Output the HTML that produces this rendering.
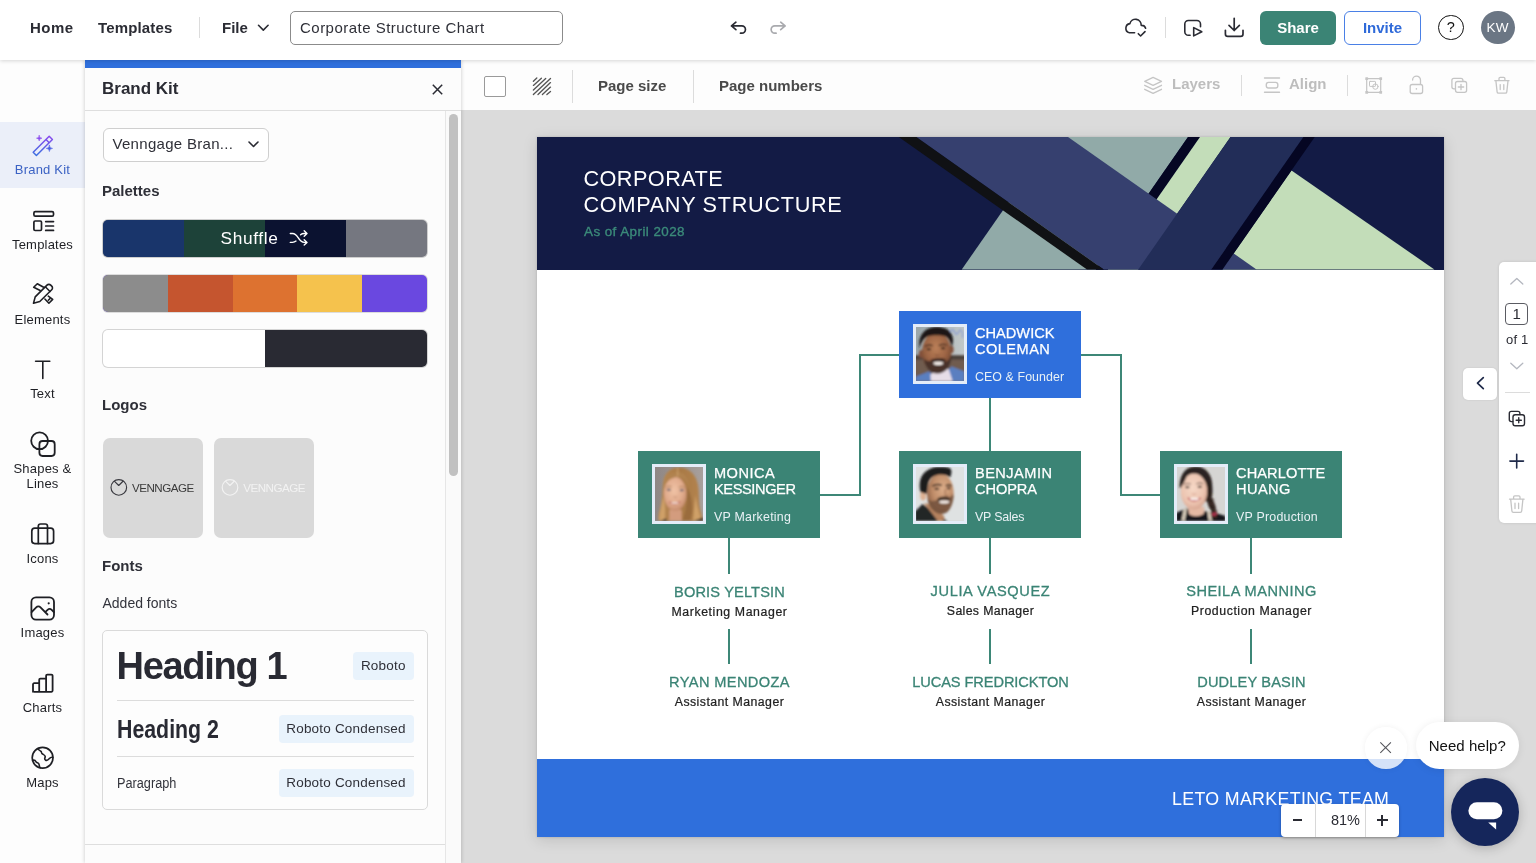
<!DOCTYPE html>
<html>
<head>
<meta charset="utf-8">
<title>Corporate Structure Chart</title>
<style>
*{box-sizing:border-box;margin:0;padding:0}
html,body{width:1536px;height:863px;overflow:hidden}
body{font-family:"Liberation Sans",sans-serif;background:#dbdbdb;position:relative;color:#2a2b33}
#root{position:absolute;left:0;top:0;width:1536px;height:863px;overflow:hidden;will-change:transform;background:#dbdbdb}
.abs{position:absolute}
svg{position:absolute;overflow:visible}
/* top bar */
#topbar{position:absolute;left:0;top:0;width:1536px;height:60px;background:#fff;box-shadow:0 1px 4px rgba(0,0,0,.16);z-index:30}
.tb-link{position:absolute;top:19px;font-size:15px;font-weight:bold;color:#2b2c34;line-height:17px;white-space:nowrap}
.vdiv{position:absolute;width:1px;background:#dcdcdc}
#title{position:absolute;left:290px;top:11px;width:273px;height:34px;border:1px solid #8b8b8b;border-radius:5px;font-size:15px;line-height:31px;padding-left:9px;color:#2f3038;background:#fff;letter-spacing:.48px}
.btn{position:absolute;top:11px;height:34px;border-radius:6px;font-size:15px;font-weight:bold;text-align:center;line-height:33px}
/* sidebar */
#sidebar{position:absolute;left:0;top:60px;width:85px;height:803px;background:#fdfdfd;z-index:5}
.sb-item{position:absolute;left:0;width:85px;text-align:center;font-size:13px;line-height:15px;color:#1e1f24;letter-spacing:.2px}
/* panel */
#panel{position:absolute;left:85px;top:60px;width:376px;height:803px;background:#fcfcfc;z-index:10;box-shadow:0 0 4px rgba(0,0,0,.22)}
.h{position:absolute;left:17px;font-size:15px;font-weight:bold;color:#2f3038;line-height:17px;white-space:nowrap}
.tag{height:27.700px;border-radius:4px;background:#e9f3fc;font-size:13.5px;line-height:28px;text-align:center;color:#2f3038;white-space:nowrap;letter-spacing:.2px}
/* toolbar2 */
#tool2{position:absolute;left:461px;top:60px;width:1075px;height:50px;background:#fdfdfd;z-index:4}
.t2{position:absolute;top:16.500px;font-size:15px;font-weight:bold;line-height:17px;white-space:nowrap}
/* page */
#page{position:absolute;left:537px;top:137px;width:907px;height:700px;background:#fff;box-shadow:0 0 2px rgba(0,0,0,.16),0 3px 14px rgba(0,0,0,.13);overflow:hidden}
.node{position:absolute;width:182px;height:87px;background:#3b8475;color:#fff}
.node .ph{position:absolute;left:14px;top:13.300px;width:54px;height:59.400px;border:3px solid #e4ecf8;overflow:hidden;background:#bbb}
.node .nm{-webkit-text-stroke:.25px #fff;position:absolute;left:76px;top:14px;font-size:14.6px;line-height:16.3px;white-space:nowrap}
.node .rl{position:absolute;left:76px;top:59px;font-size:12.4px;line-height:14px;white-space:nowrap;color:#e9f1f5}
.ln{position:absolute;background:#3d8777}
.pn{-webkit-text-stroke:.3px #3b8475;position:absolute;width:260px;text-align:center;font-size:14.6px;line-height:16px;color:#3b8475;white-space:nowrap;letter-spacing:.15px}
.pr{-webkit-text-stroke:.22px #222;position:absolute;width:260px;text-align:center;font-size:12.3px;line-height:14px;color:#222;white-space:nowrap;letter-spacing:.2px}
</style>
</head>
<body>
<svg width="0" height="0" style="position:absolute"><defs>
<filter id="bl" x="-5%" y="-5%" width="110%" height="110%"><feGaussianBlur stdDeviation="0.85"/></filter>
<radialGradient id="f1" cx=".48" cy=".38" r=".62"><stop offset="0" stop-color="#bb8059"/><stop offset=".6" stop-color="#9c6444"/><stop offset="1" stop-color="#6e4530"/></radialGradient>
<radialGradient id="f2" cx=".45" cy=".4" r=".62"><stop offset="0" stop-color="#f0c3a6"/><stop offset=".65" stop-color="#e0aa8b"/><stop offset="1" stop-color="#c48b6c"/></radialGradient>
<radialGradient id="f3" cx=".6" cy=".38" r=".65"><stop offset="0" stop-color="#dcae8a"/><stop offset=".6" stop-color="#c08d69"/><stop offset="1" stop-color="#8d6046"/></radialGradient>
<radialGradient id="f4" cx=".45" cy=".4" r=".62"><stop offset="0" stop-color="#f6d8c6"/><stop offset=".7" stop-color="#ecc4b0"/><stop offset="1" stop-color="#d7a591"/></radialGradient>
<linearGradient id="b1" x1="0" y1="0" x2="1" y2="0"><stop offset="0" stop-color="#9aa6aa"/><stop offset=".6" stop-color="#b3bcbe"/><stop offset="1" stop-color="#c2c8c8"/></linearGradient>
<linearGradient id="b2" x1="0" y1="0" x2="1" y2="0"><stop offset="0" stop-color="#8f8785"/><stop offset="1" stop-color="#a8a09d"/></linearGradient>
<linearGradient id="hr2" x1="0" y1="0" x2="1" y2="0"><stop offset="0" stop-color="#b98a55"/><stop offset=".5" stop-color="#a87945"/><stop offset="1" stop-color="#b58550"/></linearGradient>
</defs></svg>
<div id="root">

<!-- ================= PAGE (canvas) ================= -->
<div id="page">
  <div class="abs" id="banner" style="left:0;top:0;width:907px;height:132.5px;background:#131b45;overflow:hidden">
    <svg style="left:0;top:0" width="907" height="132.5" viewBox="537 137 907 132.5">
      <polygon points="1054,137 1188,137 1095.8,269.5 961.75,269.5" fill="#91aaa8"/>
      <polygon points="1188,137 1200,137 1107.8,269.5 1095.8,269.5" fill="#050623"/>
      <polygon points="1200,137 1230.5,137 1138.25,269.5 1107.8,269.5" fill="#c3ddb9"/>
      <polygon points="1291.5,170.4 1434.4,269.5 1222.5,269.5" fill="#c3ddb9"/>
      <polygon points="916.25,137 1068,137 1256.5,269.5 1103.75,269.5" fill="#36406f"/>
      <polygon points="898.75,137 916.25,137 1103.75,269.5 1087,269.5" fill="#101114"/>
      <polygon points="1230.5,137 1303.5,137 1211.25,269.5 1138.25,269.5" fill="#222d58"/>
      <polygon points="1303.5,137 1314.75,137 1222.5,269.5 1211.25,269.5" fill="#050623"/>
    </svg>
    <div class="abs" style="left:46.5px;top:29px;font-size:21.7px;line-height:25.5px;color:#fff;white-space:nowrap"><span style="letter-spacing:.42px">CORPORATE</span><br><span id="cs" style="letter-spacing:.68px">COMPANY STRUCTURE</span></div>
    <div class="abs" style="left:47px;top:86.900px;font-size:13.400px;line-height:15px;color:#3b8b7a;-webkit-text-stroke:.35px #3b8b7a;white-space:nowrap;letter-spacing:.45px">As of April 2028</div>
  </div>
  <div class="abs" id="footer" style="left:0;top:622px;width:907px;height:78px;background:#2f6fdc">
    <div class="abs" style="left:635px;top:28.500px;font-size:17.800px;line-height:22px;color:#fff;white-space:nowrap;letter-spacing:.34px">LETO MARKETING TEAM</div>
  </div>

  <!-- connectors -->
  <div class="ln" style="left:322px;top:216.5px;width:41px;height:2px"></div>
  <div class="ln" style="left:322px;top:216.5px;width:2px;height:142px"></div>
  <div class="ln" style="left:283px;top:356.5px;width:41px;height:2px"></div>
  <div class="ln" style="left:544px;top:216.5px;width:41px;height:2px"></div>
  <div class="ln" style="left:583px;top:216.5px;width:2px;height:142px"></div>
  <div class="ln" style="left:583px;top:356.5px;width:41px;height:2px"></div>
  <div class="ln" style="left:452px;top:261px;width:2px;height:53px"></div>
  <div class="ln" style="left:191px;top:401px;width:2px;height:36px"></div>
  <div class="ln" style="left:452px;top:401px;width:2px;height:36px"></div>
  <div class="ln" style="left:713px;top:401px;width:2px;height:36px"></div>
  <div class="ln" style="left:191px;top:491.500px;width:2px;height:35px"></div>
  <div class="ln" style="left:452px;top:491.500px;width:2px;height:35px"></div>
  <div class="ln" style="left:713px;top:491.500px;width:2px;height:35px"></div>

  <!-- nodes -->
  <div class="node" style="left:362px;top:174px;background:#2f6fdc">
    <div class="ph" id="ph1"><svg style="left:0;top:0" width="48" height="53.400" viewBox="0 0 48.500 53.500" preserveAspectRatio="none"><rect width="49" height="54" fill="url(#b1)"/><g filter="url(#bl)">
<rect x="-2" y="28.500" width="53" height="27" fill="#6f5c4f"/><rect x="-2" y="28.500" width="53" height="4" fill="#4a413b"/>
<path d="M34 5c2-3 4-3 5 0s3 3 4 0s3-3 4 1v5" stroke="#7f95d6" stroke-width="1.300" fill="none" opacity=".8"/>
<path d="M-1 54l1-4.500l13-5l10 7l13-12l13 5v10z" fill="#5a7fc0"/>
<path d="M14.500 47.500l8.500-5l10-.5l4 12h-22z" fill="#e7dee8"/>
<ellipse cx="5.300" cy="27" rx="2.400" ry="4" fill="#82503a"/><ellipse cx="36" cy="22.500" rx="2" ry="3.800" fill="#82503a"/>
<ellipse cx="20.800" cy="25.500" rx="14.800" ry="20" fill="url(#f1)"/>
<path d="M7.500 31c1.500 8 5.500 13.500 10.500 15s11 0 14.500-5.500s3.500-10 3.500-13c-2 5-4 6.500-6 7s-4-1.500-8-1.500s-7 1.500-9.500 1s-4-1-5-3z" fill="#43302a" opacity=".92"/>
<path d="M14.500 33c3-2 12-2.500 16-.5c-1 2-3 2-8 2s-6 0-8-1.500z" fill="#3a2720"/>
<ellipse cx="22.500" cy="36.300" rx="5" ry="1.800" fill="#f3ece8"/>
<path d="M3.500 23c-1.500-10 1.500-18.500 9.500-21.500s19-1.500 22.500 5s1.500 10.500.5 14c-1-5.500-3-9.500-6-11s-13.500-2-18.500 0s-7 8-8.500 13.500z" fill="#1c1918"/>
<ellipse cx="13" cy="22.300" rx="2.300" ry="1" fill="#2a1a14"/><ellipse cx="27.300" cy="21.300" rx="2.300" ry="1" fill="#2a1a14"/>
<path d="M9 19.500c3-1.600 6-1.600 8-.6M23 18.800c3-1.600 6-1.600 8-.6" stroke="#2a1c16" stroke-width="1.100" fill="none"/>
<path d="M19 27.500c1 1.500 4 1.500 5 0" stroke="#7a4a33" stroke-width="1" fill="none"/>
</g></svg></div>
    <div class="nm"><span style="letter-spacing:0">CHADWICK</span><br><span style="letter-spacing:.45px">COLEMAN</span></div><div class="rl" style="letter-spacing:.08px">CEO &amp; Founder</div>
  </div>
  <div class="node" style="left:101px;top:314px">
    <div class="ph" id="ph2"><svg style="left:0;top:0" width="48" height="53.400" viewBox="0 0 48.500 53.500" preserveAspectRatio="none"><rect width="49" height="54" fill="url(#b2)"/><g filter="url(#bl)">
<path d="M24 .5c-9 0-15 6-16 16s-1 18-3 25s-2 9-1 12.500h44c0-6-2-9-3-15s0-15-2-23s-8-15.500-19-15.500z" fill="url(#hr2)"/>
<path d="M8 30c-1 8-3 14-4 23h6c0-8 1-16-2-23zM41 28c1 8 3 16 5.500 25h-8c1-9 1.500-17 2.500-25z" fill="#cfa068"/>
<path d="M32 20c1 10 0 22-4 33h8c3-10 2-24-4-33z" fill="#9a6c3c"/>
<path d="M14.500 43h12.500v11h-12.500z" fill="#d39c7e"/>
<ellipse cx="20.400" cy="27" rx="11.400" ry="17" fill="url(#f2)"/>
<path d="M9 19c2-9.500 8-14 14-14s10.500 5 11.500 15c-3-6.500-7-10-11.500-10s-10 2.500-14 9z" fill="#b18350"/>
<path d="M23 1v8" stroke="#d9b27c" stroke-width=".8"/>
<path d="M14.500 35.200c3 2.800 8 2.800 11-.3c-3.500.8-7.500.9-11 .3z" fill="#c0695f" stroke="#c0695f" stroke-width=".9"/>
<ellipse cx="20" cy="36" rx="3.800" ry=".9" fill="#f3e2d8"/>
<ellipse cx="14" cy="22.800" rx="2.100" ry="1" fill="#56586a"/><ellipse cx="27" cy="23.200" rx="2.100" ry="1" fill="#56586a"/>
<path d="M11 20.300c2-1.200 4-1.200 6-.4M24 20.400c2-1 4-1 6 0" stroke="#a57a52" stroke-width=".9" fill="none"/>
<path d="M18.500 29.500c1 1.200 3 1.200 4 0" stroke="#c38c6f" stroke-width="1" fill="none"/>
<path d="M6 53.500h6l-1-2zM40 53.500h8.500v-3z" fill="#2a2423"/>
</g></svg></div>
    <div class="nm"><span style="letter-spacing:.45px">MONICA</span><br><span style="letter-spacing:-.4px">KESSINGER</span></div><div class="rl" style="letter-spacing:.25px">VP Marketing</div>
  </div>
  <div class="node" style="left:362px;top:314px">
    <div class="ph" id="ph3"><svg style="left:0;top:0" width="48" height="53.400" viewBox="0 0 48.500 53.500" preserveAspectRatio="none"><rect width="49" height="54" fill="#dfe2e2"/><g filter="url(#bl)">
<path d="M-1 44.500l7.500-7.500l25 17h-32.500z" fill="#232528"/>
<path d="M8 36l9 2l12 12l-2 4h-5z" fill="#b5825f"/>
<ellipse cx="7.200" cy="28.500" rx="3" ry="5" fill="#ddb092"/>
<ellipse cx="24.600" cy="26.500" rx="13.500" ry="20" fill="url(#f3)"/>
<path d="M11.500 32c1.500 8 6.500 14 13 15s10-4 12-10s1.500-8.500.5-10c-2 3.500-4 4.500-6.500 4.500s-6-.5-9.500 1.500s-7.500 1-9.500-1z" fill="#76543f" opacity=".9"/>
<path d="M21.500 31.800c3-2.600 9-3 13-1l-1 2.400c-3-1-8-1-11 1z" fill="#3b2a22"/>
<ellipse cx="28.500" cy="35" rx="5" ry="1.500" fill="#f5eeea"/>
<path d="M4.500 25c-2-9 0-17 6-21s9-4 13-4s10 0 11.500 2s.5 6-.5 8.500c-3-2.500-8-3.500-13-2.500s-8 4-9 8s-1 9-2 11c-2-1-4-1-6-2z" fill="#1b1a1c"/>
<ellipse cx="21" cy="21.800" rx="2.500" ry="1" fill="#2a1c16"/><ellipse cx="33" cy="21.300" rx="2" ry="1" fill="#2a1c16"/>
<path d="M16.500 19.200c3-1.800 7-1.800 9.500-.8M30 18.800c2-1 4-1 6 0" stroke="#241812" stroke-width="1.400" fill="none"/>
<path d="M29.500 22v6c1 1.200 3 1 3.500 0" stroke="#9b6b4e" stroke-width="1" fill="none"/>
</g></svg></div>
    <div class="nm"><span style="letter-spacing:.45px">BENJAMIN</span><br><span style="letter-spacing:-.1px">CHOPRA</span></div><div class="rl" style="letter-spacing:-.2px">VP Sales</div>
  </div>
  <div class="node" style="left:623px;top:314px">
    <div class="ph" id="ph4"><svg style="left:0;top:0" width="48" height="53.400" viewBox="0 0 48.500 53.500" preserveAspectRatio="none"><rect width="49" height="54" fill="#d6d5d3"/><g filter="url(#bl)">
<path d="M2.500 20c0-12 6-20.500 16-20.500s16 7 17 17s0 14-2 18h-10z" fill="#2b2220"/>
<path d="M-1 54v-8l10-4.500l18 2.500l12 2l10 3v5z" fill="#17181b"/>
<path d="M11 40h17l-1 7c-5 3-11 3-15 0z" fill="#e4b9a4"/>
<path d="M4.500 53.500l2.500-12l3 .5l-2 11.500zM30.500 44l3 .5l2 9h-3.500z" fill="#dacfbd"/>
<ellipse cx="17.200" cy="24.500" rx="13.400" ry="18" fill="url(#f4)"/>
<path d="M3 22c0-8 3-15 7-18l5-3c-2.500 3-4.500 6-5.500 9s-3.500 8-6.500 12zM14 1c6 1 12 4 15 9s3 10 3 14c2-2 3-7 2-12s-6-11-12-12z" fill="#2b2220"/>
<path d="M30.500 15c3 3 4 8 4 12s3 7 4 11s2 9 3 13l-5 2c-1-4-1-8-3-11s-3-6-3-10s1-9 0-17z" fill="#2d211f"/>
<path d="M33 30l5 3M33.500 36l5.500 3M36 42l5 2.500" stroke="#55423c" stroke-width=".9"/>
<ellipse cx="37.400" cy="47.300" rx="3" ry="1.800" fill="#a8324a" transform="rotate(-15 37.400 47.300)"/>
<path d="M11 31c2 4.200 10 4.200 13 0c-3 1.500-10 1.500-13 0z" fill="#c25a5c" stroke="#c25a5c" stroke-width="1"/>
<ellipse cx="17.500" cy="32.100" rx="4.600" ry="1.300" fill="#faf2ef"/>
<ellipse cx="10.500" cy="20.300" rx="2.200" ry=".9" fill="#3a2a26"/><ellipse cx="23" cy="19.800" rx="2.200" ry=".9" fill="#3a2a26"/>
<path d="M7 17.500c2-1.200 5-1.200 7-.2M19.500 17c2-1.200 5-1.200 7-.2" stroke="#5b4540" stroke-width=".9" fill="none"/>
<path d="M15 26.500c1 1.200 3.500 1.200 4.500 0" stroke="#d49e8b" stroke-width="1" fill="none"/>
</g></svg></div>
    <div class="nm"><span style="letter-spacing:.1px">CHARLOTTE</span><br><span style="letter-spacing:.4px">HUANG</span></div><div class="rl" style="letter-spacing:.23px">VP Production</div>
  </div>

  <!-- people -->
  <div class="pn" style="left:62.5px;top:447px">BORIS YELTSIN</div>
  <div class="pr" style="left:62.5px;top:468px;letter-spacing:0.6px">Marketing Manager</div>
  <div class="pn" style="left:323.5px;top:446px;letter-spacing:0.63px">JULIA VASQUEZ</div>
  <div class="pr" style="left:323.5px;top:467px;letter-spacing:0.35px">Sales Manager</div>
  <div class="pn" style="left:584.5px;top:446px;letter-spacing:0.47px">SHEILA MANNING</div>
  <div class="pr" style="left:584.5px;top:467px;letter-spacing:0.57px">Production Manager</div>
  <div class="pn" style="left:62.5px;top:537px;letter-spacing:0.39px">RYAN MENDOZA</div>
  <div class="pr" style="left:62.5px;top:558px;letter-spacing:0.45px">Assistant Manager</div>
  <div class="pn" style="left:323.5px;top:537px;letter-spacing:-0.08px">LUCAS FREDRICKTON</div>
  <div class="pr" style="left:323.5px;top:558px;letter-spacing:0.45px">Assistant Manager</div>
  <div class="pn" style="left:584.5px;top:537px">DUDLEY BASIN</div>
  <div class="pr" style="left:584.5px;top:558px;letter-spacing:0.45px">Assistant Manager</div>
</div>

<!-- ================= TOP BAR ================= -->
<div id="topbar">
  <svg style="left:0;top:0" width="1536" height="60" viewBox="0 0 1536 60" fill="none" stroke="#2a2b33" stroke-width="1.7" stroke-linecap="round" stroke-linejoin="round">
    <path d="M258.5 25.3l4.8 4.8l4.800-4.800" stroke-width="1.6"/>
    <path d="M735.9 22.200L731.500 25.900L735.900 29.600M731.500 25.900H741.800a3.650 3.650 0 0 1 0 7.300H740.500"/>
    <path d="M780.700 22.200L785.100 25.900L780.700 29.600M785.100 25.900H774.800a3.650 3.650 0 0 0 0 7.300H776.100" stroke="#a9aaae"/>
    <!-- cloud check -->
    <path d="M1134.600 32.800H1129.400A4.700 4.700 0 0 1 1129.900 23.600A5.750 5.750 0 0 1 1141.200 25.400A4.200 4.200 0 0 1 1145.600 28.300M1138.300 33.700l2.300 2.300l4.400-4.400" stroke-width="1.6"/>
    <!-- present -->
    <path d="M1190.100 35.300H1188.400a3.600 3.600 0 0 1-3.600-3.600V24.100a3.600 3.600 0 0 1 3.600-3.600h8.500a3.600 3.600 0 0 1 3.600 3.600V26.700M1193.700 27.600v8.300l8.100-4.150z" stroke-width="1.6"/>
    <!-- download -->
    <path d="M1234.200 18.300V30.400M1229 25.400l5.200 5.100l5.200-5.100M1225.400 30.300v3.700a2.400 2.400 0 0 0 2.400 2.400h12.800a2.400 2.400 0 0 0 2.400-2.400v-3.700"/>
  </svg>
  <div class="tb-link" style="left:30px;letter-spacing:.45px">Home</div>
  <div class="tb-link" style="left:98px;letter-spacing:.15px">Templates</div>
  <div class="vdiv" style="left:199px;top:17px;height:21px"></div>
  <div class="tb-link" style="left:222px">File</div>
  <div id="title">Corporate Structure Chart</div>
  <div class="vdiv" style="left:1165px;top:17px;height:21px"></div>
  <div class="btn" style="left:1260px;width:76px;background:#3b8475;color:#fff">Share</div>
  <div class="btn" style="left:1344px;width:77px;background:#fff;color:#2f6ad9;border:1.5px solid #4a80e6;line-height:31px">Invite</div>
  <div class="abs" style="left:1438px;top:14.800px;width:25.500px;height:25.500px;border:1.800px solid #111;border-radius:50%;font-size:14.500px;text-align:center;line-height:22.500px;color:#111">?</div>
  <div class="abs" style="left:1480.800px;top:10.600px;width:33.800px;height:33.800px;border-radius:50%;background:#6b7684;color:#fff;font-size:13.500px;text-align:center;line-height:34px;letter-spacing:.2px">KW</div>
</div>

<!-- ================= SIDEBAR ================= -->
<div id="sidebar">
  <svg style="left:0;top:0;z-index:2" width="85" height="803" viewBox="0 60 85 803" fill="none" stroke="#1e1f24" stroke-width="1.7" stroke-linecap="round" stroke-linejoin="round">
    <defs><linearGradient id="wg" x1="0" y1="0" x2="0" y2="1"><stop offset="0" stop-color="#8a49ee"/><stop offset="1" stop-color="#3a70e0"/></linearGradient></defs>
    <!-- brand kit wand -->
    <g stroke="url(#wg)" stroke-width="1.5">
      <path d="M33.2 152.3L49.2 136.3L52.4 139.5L36.4 155.5Z M46 139.5L49.2 142.7"/>
      <path d="M39.2 135.5Q39.2 138.2 41.900000000000006 138.2Q39.2 138.2 39.2 140.89999999999998Q39.2 138.2 36.5 138.2Q39.2 138.2 39.2 135.5z" fill="#8a49ee" stroke="#8a49ee" stroke-width=".6"/>
      <path d="M49.4 145.3Q49.4 148.4 52.5 148.4Q49.4 148.4 49.4 151.5Q49.4 148.4 46.3 148.4Q49.4 148.4 49.4 145.3z" fill="#4d62e4" stroke="#4d62e4" stroke-width=".6"/>
    </g>
    <!-- templates -->
    <rect x="33.9" y="211.6" width="19.6" height="4.6" rx="1.4"/>
    <rect x="33.9" y="221" width="7.6" height="9.5" rx="1.2"/>
    <path d="M45.7 221.6h7.8M45.7 226h7.8M45.7 230.4h7.8"/>
    <!-- elements: pencil + ruler -->
    <g stroke-width="1.6">
      <path d="M33.5 303.2l1.7-6.3L47 285.1a2.6 2.6 0 0 1 3.7 0l1 1a2.6 2.6 0 0 1 0 3.7L39.8 301.5z"/>
      <path d="M45.3 286.8l4.7 4.7"/>
      <path d="M40.2 290.5L33.7 287.3L37.3 283.7L43.6 287.2"/>
      <path d="M48.3 296.2l4.4 3.2l-3.8 3.8l-4-4.2"/>
      <path d="M50 298.6l-1.7 1.7"/>
    </g>
    <!-- text T -->
    <path d="M35.6 361.2h14.2M42.8 361.2v17.2" stroke-width="1.6"/>
    <!-- shapes -->
    <circle cx="39.6" cy="440.8" r="8.4" stroke-width="1.8"/>
    <rect x="39.4" y="441" width="15.3" height="15" rx="3.2" stroke-width="1.8"/>
    <!-- icons briefcase -->
    <rect x="31.8" y="528.2" width="21.8" height="15.4" rx="3"/>
    <path d="M38.3 543.4V526.3a2.3 2.3 0 0 1 2.3-2.3h4.6a2.3 2.3 0 0 1 2.3 2.3V543.4"/>
    <!-- images -->
    <rect x="31.4" y="597.4" width="22.6" height="22.2" rx="4.6" stroke-width="1.8"/>
    <circle cx="48.7" cy="603.3" r="1.1" fill="#1e1f24" stroke="none"/>
    <path d="M31.6 612.2l4.6-4.9a3 3 0 0 1 4.3 0l7 7.2M46 611.3l1.6-1.5a3 3 0 0 1 4.1 0l2.2 2.4" stroke-width="1.8"/>
    <!-- charts -->
    <path d="M33 691.8v-7.4a1.2 1.2 0 0 1 1.2-1.2h5v-3.4a1.2 1.2 0 0 1 1.2-1.2h5.7v-2.8a1.2 1.2 0 0 1 1.2-1.2h4.1a1.2 1.2 0 0 1 1.2 1.2v14.8a1.2 1.2 0 0 1-1.2 1.2H34.2a1.2 1.2 0 0 1-1.2-1.2zM39.2 683.2v8.6M46.1 678.6v13.2" stroke-width="1.8"/>
    <!-- maps globe -->
    <circle cx="42.6" cy="757.7" r="10.4" stroke-width="1.7"/>
    <path d="M38.2 748.6c.3 1.6 1.6 2 2.6 2.6c1.2.8.2 1.8 1.4 2.6c1.6 1 3.2 1.4 3 3c-.2 1.4-1.200 2 .2 3.200c1.400 1.100 3-.2 4-1.400c.8-1 2-1.600 3.300-1.300M32.700 760.300c1.400-.4 2.800.4 3.400 1.500c.6 1.200 2.200.8 2.800 2.200c.5 1.300.3 2.800 1.300 3.800" stroke-width="1.6"/>
  </svg>
  <div class="abs" style="left:0;top:62px;width:85px;height:66px;background:#ebeff9"></div>
  <div class="sb-item" style="top:102px;color:#3b62c4">Brand Kit</div>
  <div class="sb-item" style="top:177px">Templates</div>
  <div class="sb-item" style="top:252px">Elements</div>
  <div class="sb-item" style="top:326px">Text</div>
  <div class="sb-item" style="top:401px">Shapes &amp;<br>Lines</div>
  <div class="sb-item" style="top:491px">Icons</div>
  <div class="sb-item" style="top:565px">Images</div>
  <div class="sb-item" style="top:640px">Charts</div>
  <div class="sb-item" style="top:715px">Maps</div>
</div>

<!-- ================= PANEL ================= -->
<div id="panel">
  <svg style="left:0;top:0;z-index:3" width="376" height="803" viewBox="85 60 376 803" fill="none" stroke-linecap="round" stroke-linejoin="round">
    <g stroke="#fff" stroke-width="1.400">
      <path d="M290.300 233.500h2.200c3 0 4.300 2 5.800 4.450s2.800 4.450 5.800 4.450h2.700M290.300 242.400h2.200c1.500 0 2.600-.5 3.500-1.300M300.600 234.800c.9-.8 2-1.300 3.500-1.300h2.700M304.200 230.800l2.800 2.700l-2.800 2.700M304.200 239.700l2.800 2.700l-2.800 2.700"/>
    </g>
    <circle cx="118.800" cy="487.400" r="7.800" stroke="#3a3a40" stroke-width="1.150"/>
    <path d="M114.300 481.200l4.400 4.300l4.500-4.500" stroke="#3a3a40" stroke-width="1.150"/>
    <circle cx="230" cy="487.400" r="7.800" stroke="#f2f2f2" stroke-width="1.150"/>
    <path d="M225.500 481.200l4.400 4.300l4.500-4.500" stroke="#f2f2f2" stroke-width="1.150"/>
  </svg>
  <div class="abs" style="left:0;top:0;width:376px;height:8px;background:#2f6fdc"></div>
  <div class="abs" style="left:17px;top:19px;font-size:17px;font-weight:bold;line-height:20px;color:#2a2b33">Brand Kit</div>
  <div class="abs" style="left:0;top:50px;width:376px;height:1px;background:#dedede"></div>
  <!-- close X -->
  <svg style="left:347px;top:24px" width="11" height="11" viewBox="0 0 11 11"><path d="M.8.8l9.4 9.4M10.2.8L.8 10.2" stroke="#2a2b33" stroke-width="1.5" fill="none"/></svg>
  <!-- scrollbar -->
  <div class="abs" style="left:360px;top:51px;width:16px;height:752px;background:#fafafa;border-left:1px solid #e6e6e6"></div>
  <div class="abs" style="left:364px;top:54px;width:8.700px;height:362px;background:#c1c1c1;border-radius:4.500px"></div>
  <!-- dropdown -->
  <div class="abs" style="left:17.5px;top:68px;width:166px;height:33.5px;border:1px solid #cfcfcf;border-radius:6px;background:#fff"></div>
  <div class="abs" style="left:27.5px;top:75.300px;font-size:15px;line-height:17px;color:#2f3038;white-space:nowrap;letter-spacing:.3px">Venngage Bran...</div>
  <svg style="left:163px;top:81px" width="11" height="7" viewBox="0 0 11 7"><path d="M1 1l4.5 4.5L10 1" stroke="#2a2b33" stroke-width="1.6" fill="none" stroke-linecap="round" stroke-linejoin="round"/></svg>
  <div class="h" style="top:122px">Palettes</div>
  <!-- palette 1 -->
  <div class="abs" style="left:18px;top:159.500px;width:324px;height:37px;border-radius:5px;overflow:hidden;box-shadow:0 0 0 1px #cfcfcf;background:#757780">
    <div class="abs" style="left:0;top:0;width:81px;height:38px;background:#19356b"></div>
    <div class="abs" style="left:81px;top:0;width:81px;height:38px;background:#1d4239"></div>
    <div class="abs" style="left:162px;top:0;width:81px;height:38px;background:#0b1230"></div>
    <div class="abs" style="left:117.500px;top:8px;font-size:17.300px;line-height:20px;color:#fff;white-space:nowrap;letter-spacing:.65px">Shuffle</div>
  </div>
  <!-- palette 2 -->
  <div class="abs" style="left:18px;top:215px;width:324px;height:36.500px;border-radius:5px;overflow:hidden;box-shadow:0 0 0 1px #dcdcdc;background:#6a48e0">
    <div class="abs" style="left:0;top:0;width:65px;height:38px;background:#8c8c8c"></div>
    <div class="abs" style="left:64.800px;top:0;width:65px;height:38px;background:#c5552f"></div>
    <div class="abs" style="left:129.600px;top:0;width:65px;height:38px;background:#dd7230"></div>
    <div class="abs" style="left:194.400px;top:0;width:64.800px;height:38px;background:#f5c24d"></div>
  </div>
  <!-- palette 3 -->
  <div class="abs" style="left:18px;top:270px;width:324px;height:37.200px;border-radius:5px;overflow:hidden;box-shadow:0 0 0 1px #d4d4d4;background:#fff">
    <div class="abs" style="left:162px;top:0;width:163px;height:38px;background:#292a33"></div>
  </div>
  <div class="h" style="top:336px">Logos</div>
  <div class="abs" style="left:17.5px;top:377.5px;width:100px;height:100px;border-radius:7px;background:#d9d9d9"></div>
  <div class="abs" style="left:128.5px;top:377.5px;width:100px;height:100px;border-radius:7px;background:#d9d9d9"></div>
  <div class="abs" style="left:47px;top:421px;font-size:11.600px;line-height:14px;color:#3a3a3a;white-space:nowrap;letter-spacing:-.5px">VENNGAGE</div>
  <div class="abs" style="left:158.200px;top:421px;font-size:11.600px;line-height:14px;color:#f2f2f2;white-space:nowrap;letter-spacing:-.5px">VENNGAGE</div>
  <div class="h" style="top:497px">Fonts</div>
  <div class="abs" style="left:17.5px;top:535px;font-size:14px;line-height:16px;color:#33343c;white-space:nowrap">Added fonts</div>
  <!-- fonts card -->
  <div class="abs" style="left:17px;top:569.500px;width:325.500px;height:180px;border:1px solid #dadada;border-radius:5px;background:#fdfdfd"></div>
  <div class="abs" id="h1" style="left:31.5px;top:584px;font-size:38px;font-weight:bold;line-height:44px;color:#292a33;white-space:nowrap;letter-spacing:-1.3px">Heading 1</div>
  <div class="abs" style="left:31.5px;top:640px;width:297px;height:1px;background:#dcdcdc"></div>
  <div class="abs" id="h2" style="left:31.5px;top:654px;font-size:26px;font-weight:bold;line-height:30px;color:#292a33;white-space:nowrap;transform:scaleX(.82);transform-origin:0 0">Heading 2</div>
  <div class="abs" style="left:31.5px;top:696px;width:297px;height:1px;background:#dcdcdc"></div>
  <div class="abs" id="pg" style="left:31.5px;top:713.800px;font-size:15.5px;line-height:18px;color:#33343c;white-space:nowrap;transform:scaleX(.82);transform-origin:0 0">Paragraph</div>
  <div class="abs tag" style="left:268px;top:592px;width:60.5px">Roboto</div>
  <div class="abs tag" style="left:193.5px;top:655px;width:135px">Roboto Condensed</div>
  <div class="abs tag" style="left:193.5px;top:709px;width:135px">Roboto Condensed</div>
  <div class="abs" style="left:0;top:784px;width:360px;height:1px;background:#dedede"></div>
</div>

<!-- ================= TOOLBAR 2 ================= -->
<div id="tool2">
  <svg style="left:0;top:0" width="1075" height="50" viewBox="461 60 1075 50" fill="none" stroke="#c5c5c5" stroke-width="1.3" stroke-linecap="round" stroke-linejoin="round">
    <g stroke="#555" stroke-width="1.35">
      <path d="M533.400 81.200L536.800 78M533.400 85.400L541.400 78.200M533.400 90L545.700 78.400M533.400 94.600L550.500 78.500M538 94.600L550.500 82.600M542.400 94.600L550.500 87.100M546.900 94.600L550.500 91.500"/>
    </g>
    <!-- layers -->
    <path d="M1153.100 77.300L1144.700 81.300L1153.100 85.400L1161.500 81.300zM1144.700 85.300L1153.100 89.400L1161.500 85.300M1144.700 89.300L1153.100 93.400L1161.500 89.300"/>
    <!-- align -->
    <path d="M1264.500 78h15M1264.500 92.200h15" stroke-width="1.4"/>
    <rect x="1266.300" y="82.400" width="11.500" height="5.600" rx="2.200" stroke-width="1.400"/>
    <!-- group -->
    <rect x="1366.700" y="78.600" width="14" height="13.700" stroke-width="1.200"/>
    <g fill="#c5c5c5" stroke="none"><rect x="1365.300" y="77.200" width="2.800" height="2.800" rx=".5"/><rect x="1379.300" y="77.200" width="2.800" height="2.800" rx=".5"/><rect x="1365.300" y="90.900" width="2.800" height="2.800" rx=".5"/><rect x="1379.300" y="90.900" width="2.800" height="2.800" rx=".5"/></g>
    <rect x="1369.500" y="81.400" width="6" height="5" rx=".6" stroke-width="1"/>
    <circle cx="1375.400" cy="86.600" r="2.700" stroke-width="1"/>
    <!-- lock -->
    <rect x="1410.200" y="84.500" width="12.400" height="9" rx="2"/>
    <path d="M1420.500 84.400V80a3.950 3.950 0 0 0-7.900 0"/>
    <circle cx="1416.400" cy="88.900" r=".8" fill="#c5c5c5" stroke="none"/>
    <!-- copy -->
    <path d="M1455.400 88.800H1453.900a2 2 0 0 1-2-2V80.300a2 2 0 0 1 2-2h7a2 2 0 0 1 2 2V81.400"/>
    <rect x="1455.500" y="81.500" width="11.100" height="10.800" rx="2"/>
    <path d="M1461 84.300v5.400M1458.300 87h5.400"/>
    <!-- trash -->
    <path d="M1494.800 80.700h14.200M1499 80.500V78.600a1.200 1.200 0 0 1 1.200-1.200h3.500a1.200 1.200 0 0 1 1.200 1.200V80.500M1495.900 80.900l1.200 11a1.400 1.400 0 0 0 1.400 1.300h6.900a1.400 1.400 0 0 0 1.400-1.300l1.200-11M1500.200 84.600v5M1503.800 84.600v5"/>
  </svg>
  <div class="abs" style="left:23px;top:16px;width:22px;height:21px;border:1px solid #9a9a9a;border-radius:2px;background:#fff"></div>
  <div class="vdiv" style="left:111px;top:10px;height:33px"></div>
  <div class="t2" style="left:137px;color:#4a4a4a">Page size</div>
  <div class="vdiv" style="left:232px;top:10px;height:33px"></div>
  <div class="t2" style="left:258px;color:#4a4a4a">Page numbers</div>
  <div class="t2" style="left:711px;top:15.300px;color:#bdbdbd">Layers</div>
  <div class="vdiv" style="left:780px;top:15px;height:21px"></div>
  <div class="t2" style="left:828px;top:15.300px;color:#bdbdbd">Align</div>
  <div class="vdiv" style="left:886px;top:15px;height:21px"></div>
</div>

<!-- ================= FLOATING WIDGETS ================= -->
<div class="abs" style="left:1498.500px;top:262px;width:40px;height:260.500px;background:#fff;border-radius:5px 0 0 5px;box-shadow:0 0 3px rgba(0,0,0,.12);z-index:6"></div>
<div class="abs" style="left:1505.200px;top:302.600px;width:23px;height:22.700px;border:1.500px solid #5a5b62;border-radius:4px;z-index:7;font-size:15px;line-height:20px;text-align:center;color:#2a2b33">1</div>
<div class="abs" style="left:1498.500px;top:332px;width:37.500px;text-align:center;font-size:13px;line-height:15px;color:#2a2b33;z-index:7;letter-spacing:.2px">of 1</div>
<div class="abs" style="left:1504.500px;top:391.500px;width:25px;height:1px;background:#dcdcdc;z-index:7"></div>
<div class="abs" style="left:1463px;top:367.500px;width:33.500px;height:32px;background:#fff;border-radius:5px;box-shadow:0 0 2px rgba(0,0,0,.12);z-index:6"></div>
<svg style="left:0;top:0;z-index:8" width="1536" height="863" viewBox="0 0 1536 863" fill="none" stroke-linecap="round" stroke-linejoin="round">
  <path d="M1510.800 284l6-5.500l6 5.500" stroke="#b4b7bf" stroke-width="1.300"/>
  <path d="M1510.800 363.300l6 5.500l6-5.500" stroke="#b4b7bf" stroke-width="1.300"/>
  <path d="M1483.300 377.700l-5.800 5.500l5.800 5.500" stroke="#1f2a4a" stroke-width="1.700"/>
  <!-- copy -->
  <g stroke="#2a2b33" stroke-width="1.400">
    <path d="M1512.800 421.600H1511.300a2 2 0 0 1-2-2v-6.200a2 2 0 0 1 2-2h6.600a2 2 0 0 1 2 2V414.600"/>
    <rect x="1513" y="414.700" width="11.500" height="11" rx="2.200"/>
    <path d="M1518.750 417.600v5.200M1516.150 420.200h5.200"/>
  </g>
  <path d="M1516.700 454.300v13.600M1509.900 461.100h13.600" stroke="#1f2a4a" stroke-width="1.600"/>
  <!-- trash -->
  <g stroke="#c5c5c5" stroke-width="1.300">
    <path d="M1509.500 499.200h14.600M1513.600 499V497a1.200 1.200 0 0 1 1.200-1.200h4a1.200 1.200 0 0 1 1.200 1.200V499M1510.700 499.400l1.200 11.600a1.500 1.500 0 0 0 1.500 1.400h6.800a1.500 1.500 0 0 0 1.500-1.400l1.200-11.600M1515 503.200v5.400M1518.600 503.200v5.400"/>
  </g>
</svg>
<!-- zoom control -->
<div class="abs" style="left:1280.500px;top:804px;width:118.500px;height:32.500px;background:#fff;border-radius:4px;box-shadow:0 1px 3px rgba(0,0,0,.3);z-index:9">
  <div class="abs" style="left:34px;top:0;width:1px;height:32.500px;background:#d8d8d8"></div>
  <div class="abs" style="left:84px;top:0;width:1px;height:32.500px;background:#d8d8d8"></div>
  <div class="abs" style="left:12.500px;top:15.400px;width:9px;height:1.500px;background:#2a2b33"></div>
  <div class="abs" style="left:96px;top:15.400px;width:11px;height:1.500px;background:#2a2b33"></div>
  <div class="abs" style="left:100.750px;top:10.600px;width:1.500px;height:11px;background:#2a2b33"></div>
  <div class="abs" style="left:35px;top:7.500px;width:49px;text-align:right;padding-right:4.500px;font-size:14.500px;line-height:17px;color:#2a2b33;letter-spacing:0">81%</div>
</div>
<!-- help -->
<div class="abs" style="left:1365px;top:727px;width:41.500px;height:41.500px;border-radius:50%;background:rgba(255,255,255,.8);z-index:9;box-shadow:0 0 6px rgba(0,0,0,.06)"></div>
<svg style="left:1380px;top:742.200px;z-index:10" width="11.200" height="11.200" viewBox="0 0 11.200 11.200"><path d="M.3.300l10.600 10.600M10.900.300L.3 10.900" stroke="#55565c" stroke-width="1.100" fill="none"/></svg>
<div class="abs" style="left:1415.500px;top:722.300px;width:103.500px;height:46.700px;border-radius:23.500px;background:#fff;z-index:9;box-shadow:0 1px 8px rgba(0,0,0,.08);font-size:15px;line-height:48.500px;text-align:center;color:#111;letter-spacing:.05px">Need help?</div>
<div class="abs" style="left:1450.600px;top:777.800px;width:68.400px;height:68.400px;border-radius:50%;background:#15265b;z-index:9;box-shadow:0 2px 12px rgba(0,0,0,.22)"></div>
<svg style="left:1450.600px;top:777.800px;z-index:10" width="68.400" height="68.400" viewBox="1450.600 777.800 68.400 68.400"><rect x="1468" y="802" width="34" height="17" rx="8.500" fill="#fff"/><path d="M1487.800 822.400h7.900v6.900z" fill="#fff"/></svg>

</div>
</body>
</html>
